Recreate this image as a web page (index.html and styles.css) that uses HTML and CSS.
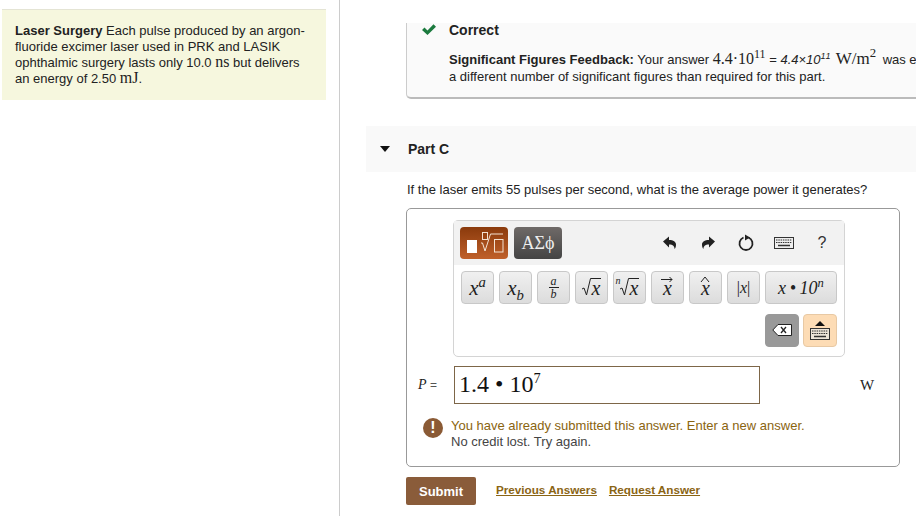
FILE: index.html
```html
<!DOCTYPE HTML>
<html>
  <head>
    <meta charset="utf-8"/>
    <title>Laser Surgery</title>
    <link rel="stylesheet" href="styles.css">
  </head>
  <body>
    <div class="sidebar">
      <div class="intro">
        <b>Laser Surgery</b> Each pulse produced by an argon-<br>
        fluoride excimer laser used in PRK and LASIK<br>
        ophthalmic surgery lasts only 10.0 <span class="math">ns</span> but delivers<br>
        an energy of 2.50 <span class="math">mJ</span>.
      </div>
    </div>
    <div class="main">
      <div class="feedback">
        <svg class="check" width="16" height="13" viewBox="0 0 16 13"><path d="M1 7l2.500-2.500 3 3L12.500 1.200 15 3.700 6.500 12z" fill="#1b7a3e"/></svg>
        <div class="feedback-text">
          <div class="correct">Correct</div>
          <div class="sigfigs">
            <b>Significant Figures Feedback:</b> Your answer <span class="math big">4.4&middot;10<sup>11</sup></span>
            <span class="eq">= <i>4.4&times;10<sup>11</sup></i></span> <span class="math big unit-math">W/m<sup>2</sup></span> was expressed to<br>
            a different number of significant figures than required for this part.
          </div>
        </div>
      </div>

      <div class="part-head">
        <span class="caret"></span>
        <b>Part C</b>
      </div>

      <p class="question">If the laser emits 55 pulses per second, what is the average power it generates?</p>

      <div class="answer-box">
        <div class="toolbar">
          <div class="tool-top">
            <div class="mode mode-on">
              <span class="mode-square"></span>
              <svg width="24" height="24" viewBox="0 0 24 24" fill="none" stroke="#f3e2d2" stroke-width="1"><rect x="2.500" y="1.500" width="5" height="7"/><path d="M1 12h1.500L5 20l5.500-17H23"/><rect x="14.500" y="8.500" width="8.500" height="12.500"/></svg>
            </div>
            <div class="mode mode-off">&Alpha;&Sigma;&#981;</div>
            <div class="tool-icons">
              <svg width="16" height="16" viewBox="0 0 16 16"><path d="M1 6.500L7 1.500V5c4.500 0 7 2 7 4.500 0 2-.5 3.500-1.500 4.500.2-2.500-1.500-4.500-5.500-4.500v3z" fill="#222"/></svg>
              <svg width="16" height="16" viewBox="0 0 16 16"><path d="M15 6.500L9 1.500V5C4.500 5 2 7 2 9.500c0 2 .5 3.500 1.500 4.500-.2-2.500 1.500-4.500 5.500-4.500v3z" fill="#222"/></svg>
              <svg width="18" height="18" viewBox="0 0 18 18" fill="none"><path d="M11.500 3.500a6.500 6.500 0 1 1-5 0" stroke="#222" stroke-width="1.800"/><path d="M8 0.500l5 3-5 3z" fill="#222"/></svg>
              <svg class="kbd" width="20" height="12" viewBox="0 0 20 12"><rect x="0.500" y="0.500" width="19" height="11" fill="#eee" stroke="#333"/><path d="M2 3h16M2 5.500h16" stroke="#333" stroke-width="1.200" stroke-dasharray="1.500 .8"/><path d="M4 8.500h12" stroke="#333" stroke-width="1.500"/></svg>
              <span class="help">?</span>
            </div>
          </div>
          <div class="key-row">
            <div class="key"><i class="kx">x<sup>a</sup></i></div>
            <div class="key"><i class="kx">x<sub>b</sub></i></div>
            <div class="key"><span class="frac"><i>a</i><i class="den">b</i></span></div>
            <div class="key">
              <span class="root">
                <svg width="9" height="18" viewBox="0 0 9 18" fill="none" stroke="#222"><path d="M0 11l2-1 2.500 7L8.500 .5H9"/></svg><i class="over">x</i>
              </span>
            </div>
            <div class="key">
              <span class="root">
                <i class="index">n</i>
                <svg width="9" height="18" viewBox="0 0 9 18" fill="none" stroke="#222"><path d="M0 11l2-1 2.500 7L8.500 .5H9"/></svg><i class="over">x</i>
              </span>
            </div>
            <div class="key">
              <span class="accent">
                <svg class="acc-mark" width="12" height="7" viewBox="0 0 12 7" fill="none" stroke="#222"><path d="M0 3.500h11M8.500 1L11 3.500 8.500 6"/></svg>
                <i>x</i>
              </span>
            </div>
            <div class="key">
              <span class="accent">
                <svg class="acc-mark" width="12" height="7" viewBox="0 0 12 7" fill="none" stroke="#222"><path d="M2 6l4-5 4 5"/></svg>
                <i>x</i>
              </span>
            </div>
            <div class="key abs">|<i>x</i>|</div>
            <div class="key key-wide"><i>x&thinsp;&bull;&thinsp;10<sup>n</sup></i></div>
          </div>
          <div class="key-row key-row-end">
            <div class="key key-dark">
              <svg width="20" height="12" viewBox="0 0 20 12" fill="#fff" stroke="#222"><path d="M6 .5h13.500v11H6L.8 6z"/><path d="M9 3l5 6M14 3l-5 6" fill="none" stroke-width="1.300"/></svg>
            </div>
            <div class="key key-peach">
              <span class="up-tip"></span>
              <svg width="20" height="12" viewBox="0 0 20 12"><rect x="0.500" y="0.500" width="19" height="11" fill="#ece4d8" stroke="#333"/><path d="M2 3h16M2 5.500h16" stroke="#333" stroke-width="1.200" stroke-dasharray="1.500 .8"/><path d="M4 8.500h12" stroke="#333" stroke-width="1.500"/></svg>
            </div>
          </div>
        </div>

        <div class="input-row">
          <span class="var"><i>P</i> <span class="equals">=</span></span>
          <div class="input-box">1.4 &bull; 10<sup>7</sup></div>
          <span class="unit">W</span>
        </div>

        <div class="warning">
          <span class="warn-icon">!</span>
          <div>
            <div class="warn-line">You have already submitted this answer. Enter a new answer.</div>
            <div>No credit lost. Try again.</div>
          </div>
        </div>
      </div>

      <div class="actions">
        <button class="submit">Submit</button>
        <a class="action-link first-link" href="#">Previous Answers</a>
        <a class="action-link" href="#">Request Answer</a>
      </div>
    </div>
  </body>
</html>
```

FILE: styles.css
```css
html, body { height: 516px; overflow: hidden; }
body
{
  margin: 0;
  display: flex;
  background-color: white;
  color: #222;
  font-family: "Liberation Sans", Arial, sans-serif;
  font-size: 13px;
  line-height: 16px;
}
.math { font-family: "Liberation Serif", serif; font-size: 16px; line-height: 0; }
.big { font-size: 16px; }
.big sup { font-size: 75%; }
.unit-math { font-size: 17px; margin: 0 3px 0 1px; }
.eq sup { letter-spacing: .5px; }
sup { font-size: 70%; line-height: 0; }
sub { font-size: 70%; line-height: 0; }

/* left column */
.sidebar
{
  width: 340px;
  height: 516px;
  flex: none;
  box-sizing: border-box;
  border-right: 1px solid #ccc;
  padding: 9px 13px 0 2px;
}
.intro
{
  background-color: #f6f7de;
  border-top: 1px solid #e4e4d4;
  padding: 13px;
  height: 91px;
  box-sizing: border-box;
}

/* right column */
.main { flex: 1; min-width: 0; padding: 23px 0 0 26px; overflow: hidden; }
.feedback
{
  margin-left: 40px;
  margin-right: -60px;
  height: 76px;
  box-sizing: border-box;
  display: flex;
  gap: 12px;
  padding-left: 14px;
  background-color: #fafafa;
  border-left: 1px solid #ccc;
  border-bottom: 2px solid #bbb;
  border-bottom-left-radius: 5px;
  white-space: nowrap;
}
.check { flex: none; }
.correct { font-size: 14px; font-weight: bold; line-height: 14px; }
.sigfigs { margin-top: 14px; line-height: 17px; }

.part-head
{
  margin-top: 27px;
  height: 46px;
  background-color: #f9f9f9;
  display: flex;
  align-items: center;
  gap: 18px;
  padding-left: 14px;
  font-size: 14px;
}
.caret
{
  width: 0;
  height: 0;
  border-left: 5px solid transparent;
  border-right: 5px solid transparent;
  border-top: 6px solid #111;
}
.question { margin: 10px 0 10px 41px; }

.answer-box
{
  margin-left: 40px;
  margin-right: 16px;
  height: 259px;
  box-sizing: border-box;
  border: 1px solid #999;
  border-radius: 5px;
  padding: 11px 0 0 46px;
}

/* math toolbar */
.toolbar
{
  width: 392px;
  height: 137px;
  box-sizing: border-box;
  border: 1px solid #d4d4d4;
  border-radius: 5px;
}
.tool-top
{
  height: 44px;
  background-color: #f2f2f2;
  display: flex;
  align-items: center;
  gap: 6px;
  padding: 0 0 0 6px;
}
.mode
{
  width: 48px;
  height: 32px;
  border-radius: 4px;
  box-sizing: border-box;
  display: flex;
  align-items: center;
  justify-content: center;
}
.mode-on
{
  background: linear-gradient(#8a3a0c, #c0602a);
  justify-content: flex-start;
  gap: 3px;
  padding-left: 7px;
}
.mode-square { width: 10px; height: 13px; background-color: white; margin-top: 7px; }
.mode-off
{
  background: linear-gradient(#6f6a68, #444);
  color: #eee;
  font-family: "Liberation Serif", serif;
  font-size: 18px;
}
.tool-icons
{
  flex: 1;
  display: grid;
  grid-template-columns: repeat(5, 38px);
  justify-items: center;
  align-items: center;
  padding-left: 83px;
}
.help { font-size: 16px; color: #333; }

.key-row { display: flex; gap: 5px; padding: 6px 0 0 7px; }
.key-row-end { justify-content: flex-end; gap: 4px; padding: 10px 7px 0 0; }
.key
{
  width: 33px;
  height: 33px;
  box-sizing: border-box;
  border: 1px solid #c8c8c8;
  border-radius: 4px;
  background: linear-gradient(#f0f0f0, #dcdcdc);
  display: flex;
  align-items: center;
  justify-content: center;
  font-family: "Liberation Serif", serif;
  font-size: 20px;
  color: #222;
}
.kx { font-size: 21px; }
.frac { display: flex; flex-direction: column; align-items: center; font-size: 12px; line-height: 12px; }
.den { border-top: 1px solid #222; padding: 0 2px; }
.root { position: relative; display: flex; align-items: flex-start; line-height: 18px; }
.over { border-top: 1px solid #222; padding: 0 1px; }
.index { position: absolute; left: -4px; top: -2px; font-size: 10px; line-height: 10px; }
.accent { position: relative; line-height: 20px; }
.acc-mark { position: absolute; left: -2px; top: -2px; }
.abs { font-size: 16px; }
.key-wide { width: 72px; font-size: 18px; }
.key-dark { background: #999; border-color: #999; padding-bottom: 2px; }
.key-peach { background: #fddcb5; border-color: #e8c9a4; flex-direction: column; gap: 2px; }
.key-dark, .key-peach { width: 34px; }
.up-tip
{
  width: 0;
  height: 0;
  border-left: 5px solid transparent;
  border-right: 5px solid transparent;
  border-bottom: 5px solid #111;
}

/* answer input */
.input-row { display: flex; align-items: center; margin: 9px 0 0 -35px; }
.var { width: 36px; font-family: "Liberation Serif", serif; font-size: 14px; white-space: nowrap; }
.equals { font-family: "Liberation Sans", Arial, sans-serif; font-size: 12px; color: #555; }
.input-box
{
  width: 306px;
  height: 38px;
  box-sizing: border-box;
  border: 1px solid #7d6648;
  padding: 0 4px;
  font-family: "Liberation Serif", serif;
  font-size: 24px;
  line-height: 35px;
  color: #111;
}
.input-box sup { font-size: 60%; }
.unit { margin-left: 100px; font-family: "Liberation Serif", serif; font-size: 15px; }

.warning { display: flex; gap: 8px; margin: 14px 0 0 -30px; color: #444; }
.warn-icon
{
  flex: none;
  width: 20px;
  height: 20px;
  border-radius: 50%;
  background-color: #8a5a35;
  color: white;
  font-size: 16px;
  font-weight: bold;
  line-height: 20px;
  text-align: center;
}
.warn-line { color: #8a6410; }

.actions { display: flex; align-items: center; margin: 10px 0 0 40px; }
.submit
{
  width: 70px;
  height: 28px;
  border: none;
  border-radius: 2px;
  background-color: #8a5c3a;
  color: white;
  font-family: "Liberation Sans", Arial, sans-serif;
  font-size: 13px;
  font-weight: bold;
}
.action-link { margin-left: 12px; padding-bottom: 2px; color: #8a6414; font-size: 11.7px; font-weight: bold; }
.first-link { margin-left: 20px; }
```
